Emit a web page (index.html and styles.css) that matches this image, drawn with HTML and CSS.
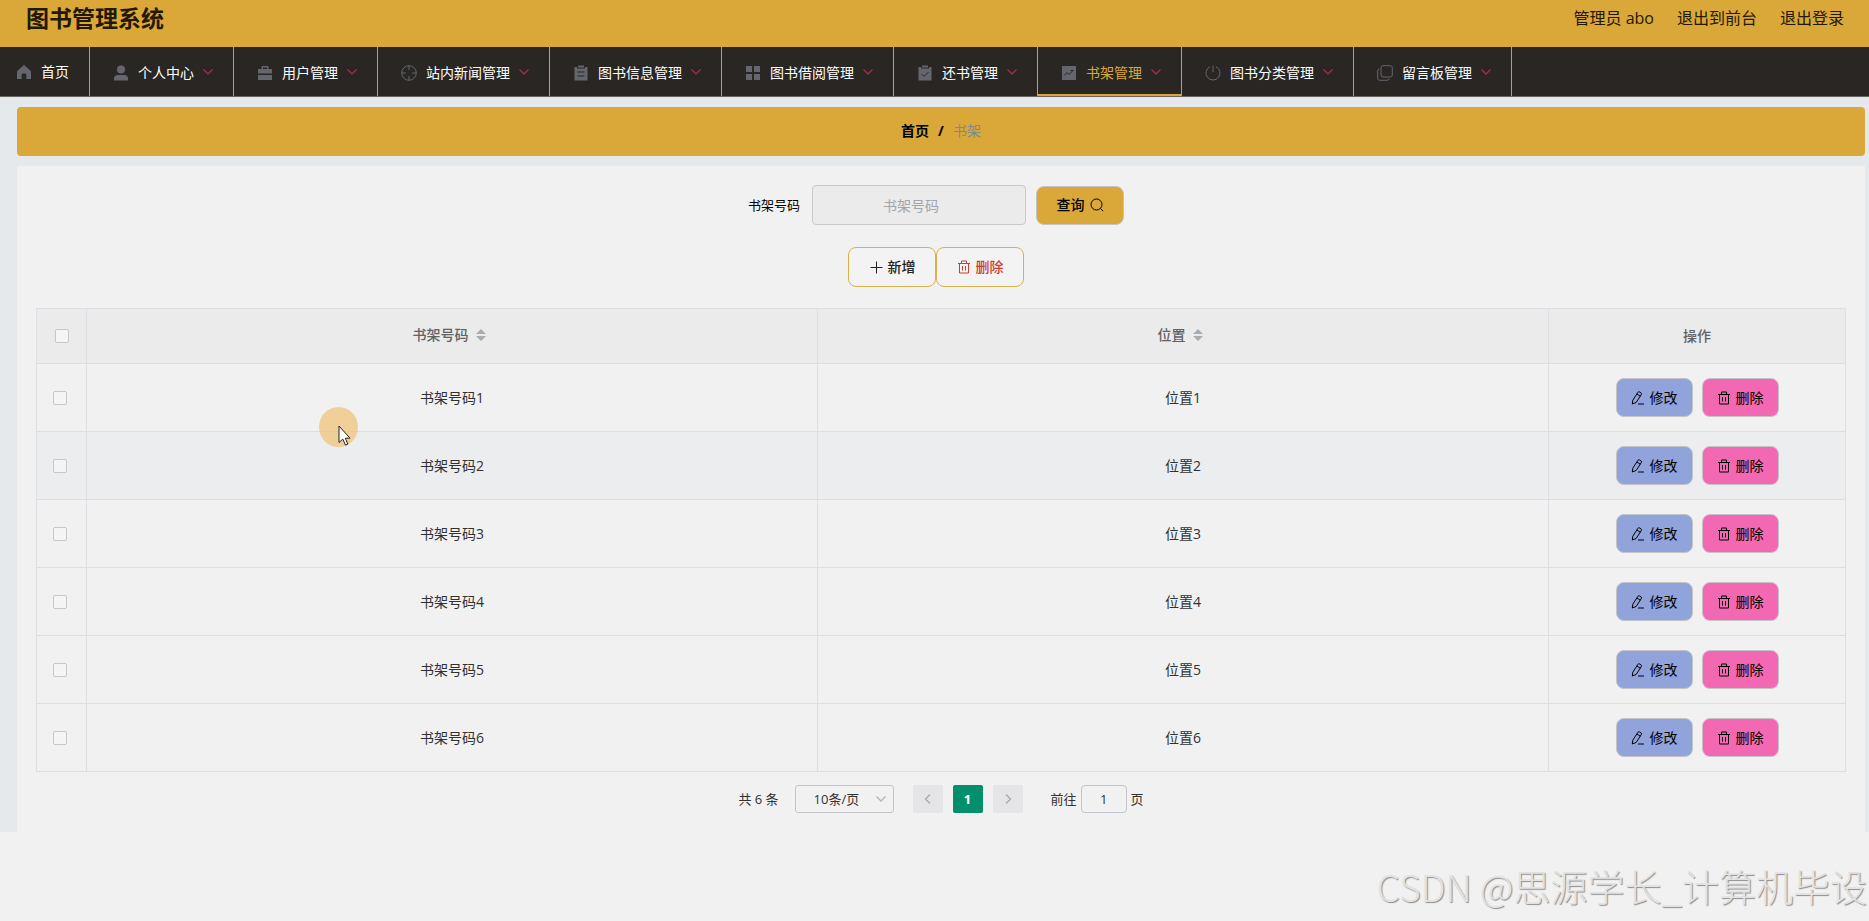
FILE: index.html
```html
<!DOCTYPE html>
<html lang="zh-CN">
<head>
<meta charset="utf-8">
<meta name="viewport" content="width=device-width, initial-scale=1">
<title>图书管理系统</title>
<link rel="stylesheet" href="styles.css">
</head>
<body>
<svg class="sprite" aria-hidden="true">
  <symbol id="i-trash" viewBox="0 0 14 14"><path d="M1 3.500h12M4.500 3.500v-2.500h5v2.500M2.500 3.500v9.500h9v-9.500M5.500 6v4.500M8.500 6v4.500" fill="none" stroke="currentColor"/></symbol>
  <symbol id="i-edit" viewBox="0 0 14 14"><path d="M1.800 9.200 7 1.200q.6-.8 1.400-.3l1.700 1.100q.8.600.3 1.400l-5.200 8L1.300 13zM5.900 3l3.500 2.300M7 13h6" fill="none" stroke="currentColor" stroke-linejoin="round"/></symbol>
  <symbol id="i-down" viewBox="0 0 12 12"><path d="M1.500 3.500 6 8l4.500-4.500" fill="none" stroke="currentColor" stroke-width="1.300"/></symbol>
</svg>

<header class="topbar">
  <h1 class="topbar-title">图书管理系统</h1>
  <div class="topbar-user">
    <span>管理员 abo</span>
    <a href="#front">退出到前台</a>
    <a href="#logout">退出登录</a>
  </div>
</header>

<nav class="menu">
  <a class="menu-item menu-home" href="#home"><svg class="menu-icon" viewBox="0 0 16 16"><path d="M8 1 1 7.200V15h4.600V10.500a1 1 0 0 1 1-1h2.800a1 1 0 0 1 1 1V15H15V7.200z"/></svg>首页</a>
  <a class="menu-item" href="#me"><svg class="menu-icon" viewBox="0 0 16 16"><circle cx="8" cy="4.500" r="4"/><path d="M1 15.500v-2Q1 10 5 10h6q4 0 4 3.500v2z"/></svg>个人中心<svg class="menu-arrow"><use href="#i-down"/></svg></a>
  <a class="menu-item" href="#users"><svg class="menu-icon" viewBox="0 0 16 16"><path d="M4.500 4V1h7v3H15v4.500H1V4zM6 2.500V4h4V2.500zM1 10h14v5H1z" fill-rule="evenodd"/></svg>用户管理<svg class="menu-arrow"><use href="#i-down"/></svg></a>
  <a class="menu-item" href="#news"><svg class="menu-icon menu-icon-line" viewBox="0 0 16 16"><circle cx="8" cy="8" r="7.300"/><path d="M8 1v4M8 11v4M1 8h4M11 8h4"/></svg>站内新闻管理<svg class="menu-arrow"><use href="#i-down"/></svg></a>
  <a class="menu-item" href="#books"><svg class="menu-icon" viewBox="0 0 16 16"><path d="M1.500 2H4v1.500h8V2h2.500v13.500h-13zM5 .5h6v2H5zM4.500 6.500v1h7v-1zM4.500 10.500v1h7v-1z" fill-rule="evenodd"/></svg>图书信息管理<svg class="menu-arrow"><use href="#i-down"/></svg></a>
  <a class="menu-item" href="#borrow"><svg class="menu-icon" viewBox="0 0 16 16"><path d="M1 1h6v6H1zM9 1h6v6H9zM1 9h6v6H1zM9 9h6v6H9z"/></svg>图书借阅管理<svg class="menu-arrow"><use href="#i-down"/></svg></a>
  <a class="menu-item" href="#return"><svg class="menu-icon" viewBox="0 0 16 16"><path d="M1.500 2H4v1.500h8V2h2.500v13.500h-13zM5 .5h6v2H5z"/><path class="menu-icon-cut" d="m4.500 9 2.500 2.500L11.500 7"/></svg>还书管理<svg class="menu-arrow"><use href="#i-down"/></svg></a>
  <a class="menu-item menu-active" href="#shelf" aria-current="page"><svg class="menu-icon" viewBox="0 0 16 16"><path d="M1 1h14v14H1z"/><path class="menu-icon-cut" d="m3 10.500 3-3 2 2 4-4M9.500 5.500h3"/></svg>书架管理<svg class="menu-arrow"><use href="#i-down"/></svg></a>
  <a class="menu-item" href="#category"><svg class="menu-icon menu-icon-line" viewBox="0 0 16 16"><path d="M5 1.700a7 7 0 1 0 6 0M8 .5v6.500"/></svg>图书分类管理<svg class="menu-arrow"><use href="#i-down"/></svg></a>
  <a class="menu-item" href="#messages"><svg class="menu-icon menu-icon-line" viewBox="0 0 16 16"><rect x="4" y=".7" width="11.300" height="11.300" rx="2"/><path d="M2.500 4Q.7 4 .7 6v7.300q0 2 2 2H10q2 0 2-1.800"/></svg>留言板管理<svg class="menu-arrow"><use href="#i-down"/></svg></a>
</nav>

<main class="main">
  <div class="crumbs">
    <a class="crumbs-home" href="#home">首页</a><span class="crumbs-sep">/</span><span class="crumbs-here">书架</span>
  </div>

  <section class="panel">
    <form class="search">
      <label class="search-label" for="code">书架号码</label>
      <input class="search-input" id="code" type="text" placeholder="书架号码">
      <button class="btn btn-query" type="button">查询<svg class="btn-icon" viewBox="0 0 14 14"><circle cx="6.500" cy="6.500" r="5.500" fill="none" stroke="currentColor"/><path d="m10.500 10.500 2.700 2.700" stroke="currentColor"/></svg></button>
    </form>

    <div class="actions">
      <button class="btn btn-line" type="button"><svg class="btn-icon" viewBox="0 0 14 14"><path d="M7.500 1.500v12M1.500 7.500h12" stroke="currentColor"/></svg>新增</button>
      <button class="btn btn-line btn-remove" type="button"><svg class="btn-icon"><use href="#i-trash"/></svg>删除</button>
    </div>

    <table class="grid">
      <colgroup><col class="col-check"><col><col><col class="col-ops"></colgroup>
      <thead>
        <tr>
          <th class="head-check"><input class="check" type="checkbox" aria-label="全选"></th>
          <th><span class="sortable">书架号码<svg class="sort" viewBox="0 0 10 14"><path d="M0 6 5 1l5 5zM0 8h10l-5 5z"/></svg></span></th>
          <th><span class="sortable">位置<svg class="sort" viewBox="0 0 10 14"><path d="M0 6 5 1l5 5zM0 8h10l-5 5z"/></svg></span></th>
          <th>操作</th>
        </tr>
      </thead>
      <tbody>
        <tr><td><input class="check" type="checkbox" aria-label="选择书架号码1"></td><td>书架号码1</td><td>位置1</td><td><div class="ops"><button class="btn btn-edit" type="button"><svg class="btn-icon"><use href="#i-edit"/></svg>修改</button><button class="btn btn-del" type="button"><svg class="btn-icon"><use href="#i-trash"/></svg>删除</button></div></td></tr>
        <tr class="row-hover"><td><input class="check" type="checkbox" aria-label="选择书架号码2"></td><td>书架号码2</td><td>位置2</td><td><div class="ops"><button class="btn btn-edit" type="button"><svg class="btn-icon"><use href="#i-edit"/></svg>修改</button><button class="btn btn-del" type="button"><svg class="btn-icon"><use href="#i-trash"/></svg>删除</button></div></td></tr>
        <tr><td><input class="check" type="checkbox" aria-label="选择书架号码3"></td><td>书架号码3</td><td>位置3</td><td><div class="ops"><button class="btn btn-edit" type="button"><svg class="btn-icon"><use href="#i-edit"/></svg>修改</button><button class="btn btn-del" type="button"><svg class="btn-icon"><use href="#i-trash"/></svg>删除</button></div></td></tr>
        <tr><td><input class="check" type="checkbox" aria-label="选择书架号码4"></td><td>书架号码4</td><td>位置4</td><td><div class="ops"><button class="btn btn-edit" type="button"><svg class="btn-icon"><use href="#i-edit"/></svg>修改</button><button class="btn btn-del" type="button"><svg class="btn-icon"><use href="#i-trash"/></svg>删除</button></div></td></tr>
        <tr><td><input class="check" type="checkbox" aria-label="选择书架号码5"></td><td>书架号码5</td><td>位置5</td><td><div class="ops"><button class="btn btn-edit" type="button"><svg class="btn-icon"><use href="#i-edit"/></svg>修改</button><button class="btn btn-del" type="button"><svg class="btn-icon"><use href="#i-trash"/></svg>删除</button></div></td></tr>
        <tr><td><input class="check" type="checkbox" aria-label="选择书架号码6"></td><td>书架号码6</td><td>位置6</td><td><div class="ops"><button class="btn btn-edit" type="button"><svg class="btn-icon"><use href="#i-edit"/></svg>修改</button><button class="btn btn-del" type="button"><svg class="btn-icon"><use href="#i-trash"/></svg>删除</button></div></td></tr>
      </tbody>
    </table>

    <div class="pager">
      <span>共 6 条</span>
      <span class="pager-size">
        <select class="pager-select" aria-label="每页条数"><option>10条/页</option></select>
        <svg class="pager-arrow"><use href="#i-down"/></svg>
      </span>
      <div class="pager-pages">
        <button class="page" type="button" aria-label="上一页" disabled><svg class="page-icon" viewBox="0 0 12 12"><path d="M8 1.500 3.500 6 8 10.500"/></svg></button>
        <button class="page page-current" type="button">1</button>
        <button class="page" type="button" aria-label="下一页" disabled><svg class="page-icon" viewBox="0 0 12 12"><path d="M4 1.500 8.500 6 4 10.500"/></svg></button>
      </div>
      <label class="pager-jump">前往<input class="pager-input" type="text" value="1">页</label>
    </div>
  </section>
</main>

<div class="pointer" aria-hidden="true"><svg class="pointer-arrow" viewBox="0 0 13 21"><path d="M1 1v16.500l3.800-3.400 2.700 6 2.400-1-2.600-5.900H12z"/></svg></div>
<div class="watermark">CSDN @思源学长_计算机毕设</div>
</body>
</html>
```

FILE: styles.css
```css
* { box-sizing: border-box; }

body {
  margin: 0;
  min-height: 100vh;
  position: relative;
  background: #f1f1f1;
  color: #303133;
  font-family: "Open Sans", "Noto Sans CJK SC", sans-serif;
  font-size: 14px;
  line-height: 20px;
}

a { color: inherit; text-decoration: none; }
button, input, select { font: inherit; color: inherit; margin: 0; }
.sprite { display: none; }

/* top bar */
.topbar {
  display: flex;
  justify-content: space-between;
  padding: 0 25px 11px 26px;
  background: #daa838;
  color: #231800;
}
.topbar-title { margin: 0; font-size: 23px; line-height: 36px; font-weight: 700; }
.topbar-user { display: flex; gap: 23px; font-size: 16px; line-height: 36px; }

/* navigation */
.menu { display: flex; height: 50px; background: #292624; color: #fff; border-bottom: 1px solid #68645f; }
.menu-item {
  display: flex;
  align-items: center;
  padding: 2px 19px 0;
  border-right: 1px solid #a5a3a1;
  white-space: nowrap;
}
.menu-home { padding: 0 20px 0 12px; }
.menu-icon { width: 16px; height: 16px; margin: 0 9px 0 4px; fill: #65666d; }
.menu-icon-line { fill: none; stroke: #65666d; }
.menu-icon-cut { fill: none; stroke: #292624; }
.menu-arrow { width: 12px; height: 12px; margin: 0 0 2px 8px; color: #a52a5c; }
.menu-active { color: #daa838; box-shadow: inset 0 -2px #daa838; }

/* page body */
.main { padding: 10px 4px 0 17px; background: #e6e9ec; }
.crumbs {
  display: flex;
  justify-content: center;
  gap: 9px;
  padding: 14px 0 15px;
  margin-bottom: 10px;
  border-radius: 4px;
  background: #daa838;
}
.crumbs-home, .crumbs-sep { color: #000; font-weight: 700; }
.crumbs-here { color: #82898c; }
.panel { padding: 19px; background: #f1f1f1; }

.search { display: flex; justify-content: center; align-items: center; gap: 10px; padding-right: 10px; }
.search-label { font-size: 13px; color: #000; margin-right: 2px; }
.search-input {
  width: 214px;
  height: 40px;
  padding: 0 31px 0 15px;
  border: 1px solid #c8c9ca;
  border-radius: 4px;
  background: #ebebeb;
  text-align: center;
}
.search-input::placeholder { color: #a4a5aa; }

.btn {
  display: flex;
  justify-content: center;
  align-items: center;
  gap: 5px;
  height: 39px;
  padding: 0 12px;
  border: 1px solid #c4c4c8;
  border-radius: 8px;
  color: #000;
  white-space: nowrap;
}
.btn-icon { flex: none; width: 14px; height: 14px; }
.btn-query { width: 88px; background: #daa838; font-weight: 500; }
.actions { display: flex; justify-content: center; padding: 22px 10px 21px 0; }
.btn-line { width: 88px; height: 40px; border-color: #d9b24c; background: #f3f3f3; font-weight: 500; color: #222; }
.btn-remove { color: #cf3a32; }

/* data table */
.grid { width: 100%; table-layout: fixed; border-collapse: collapse; text-align: center; }
.grid th, .grid td { padding: 0; border: 1px solid #dcdee3; }
.grid th { height: 55px; background: #ebebeb; color: #606266; font-weight: 500; }
.grid td { height: 68px; }
.row-hover { background: #ebedee; }
.col-check { width: 50px; }
.col-ops { width: 297px; }
.sortable { display: inline-flex; align-items: center; gap: 7px; padding: 0 6px 2px 0; }
.sort { width: 10px; height: 14px; fill: #a9abb1; }
.check {
  appearance: none;
  display: block;
  width: 14px;
  height: 14px;
  margin: 0 16px;
  border: 1px solid #c6c7cb;
  border-radius: 2px;
  background: #f4f4f4;
}
.head-check .check { margin: 0 18px; }
.ops { display: flex; justify-content: center; gap: 9px; }
.btn-edit { width: 77px; background: #90a3da; }
.btn-del { width: 77px; background: #f368b3; }

/* pagination */
.pager { display: flex; justify-content: center; align-items: center; padding-top: 13px; font-size: 13px; }
.pager-size { position: relative; margin: 0 19px 0 16px; }
.pager-select {
  appearance: none;
  display: block;
  width: 99px;
  height: 28px;
  padding: 0 18px;
  border: 1px solid #c3c5ca;
  border-radius: 3px;
  background: transparent;
}
.pager-arrow { position: absolute; right: 7px; top: 8px; width: 12px; height: 12px; color: #b0b3ba; pointer-events: none; }
.pager-pages { display: flex; gap: 10px; }
.page {
  display: grid;
  place-items: center;
  width: 30px;
  height: 28px;
  padding: 0;
  border: 0;
  border-radius: 2px;
  background: #e5e5e7;
}
.page-icon { width: 12px; height: 12px; fill: none; stroke: #a9acb2; stroke-width: 1.5; }
.page-current { background: #038e6c; color: #fff; font-weight: 700; }
.pager-jump { display: flex; align-items: center; gap: 4px; margin-left: 28px; }
.pager-input {
  width: 46px;
  height: 28px;
  padding: 0;
  border: 1px solid #c3c5ca;
  border-radius: 4px;
  background: transparent;
  text-align: center;
}

/* mouse pointer highlight */
.pointer {
  position: absolute;
  left: 319px;
  top: 407px;
  width: 39px;
  height: 40px;
  border-radius: 50%;
  background: rgba(240, 190, 105, 0.65);
}
.pointer-arrow { position: absolute; left: 19px; top: 18px; width: 13px; height: 21px; fill: #fff; stroke: #222; }

.watermark {
  position: absolute;
  right: 2px;
  bottom: 9px;
  color: #e2e2e2;
  font-family: "Noto Sans CJK SC", sans-serif;
  font-size: 37px;
  font-weight: 300;
  line-height: 52px;
  text-shadow: 1px 1px 1px #8c8c8c;
  white-space: nowrap;
}
```
